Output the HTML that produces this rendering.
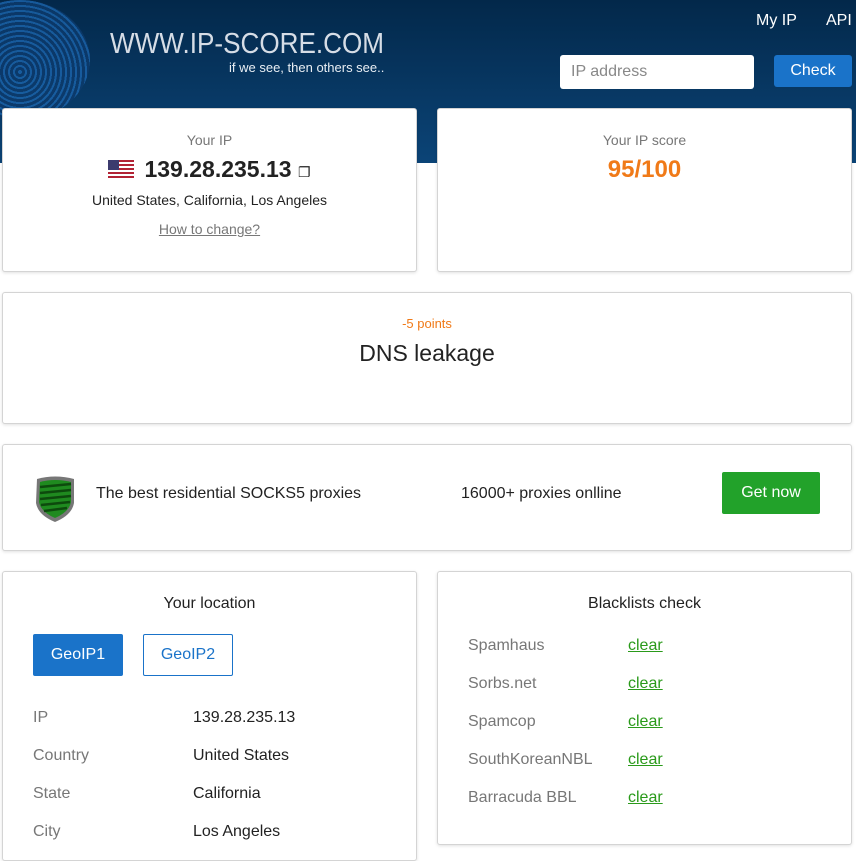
<!DOCTYPE html>
<html><head><style>
*{box-sizing:border-box;margin:0;padding:0}
body{width:856px;height:850px;overflow:hidden;background:#fff;font-family:"Liberation Sans",sans-serif;color:#222;position:relative}
.hdr{position:absolute;left:0;top:0;width:856px;height:163px;background:linear-gradient(180deg,#03284a 0%,#0b4477 100%)}
.fp{position:absolute;left:-50px;top:0px;width:140px;height:120px;border-radius:50%;background:repeating-radial-gradient(circle at 50% 60%,#1a62a8 0 2px,#0c3a6c 2px 5px);opacity:.85}
.logo{position:absolute;left:110px;top:28px;color:#d6dde6;font-size:29px;transform:scaleX(.9);transform-origin:0 0}
.tag{position:absolute;left:229px;top:60px;color:#e8eef4;font-size:13px}
.nav{position:absolute;top:12px;color:#fff;font-size:16px}
.inp{position:absolute;left:560px;top:55px;width:194px;height:34px;background:#fff;border-radius:3px;color:#888;font-size:16px;padding:8px 11px}
.btn{position:absolute;left:774px;top:55px;width:78px;height:32px;background:#1a73c9;border-radius:3px;color:#fff;font-size:16px;text-align:center;line-height:32px}
.card{position:absolute;background:#fff;border:1px solid #d4d4d4;border-radius:3px;box-shadow:0 1px 3px rgba(0,0,0,.12)}
.c{text-align:center}
.lbl{color:#777;font-size:14px}
.row{position:absolute;font-size:16px}
.k{color:#777}
.g{color:#2a9a1a;text-decoration:underline}
</style></head><body>
<div class="hdr"><div class="fp"></div>
<div class="logo">WWW.IP-SCORE.COM</div><div class="tag">if we see, then others see..</div>
<div class="nav" style="left:756px">My IP</div><div class="nav" style="left:826px">API</div>
<div class="inp">IP address</div><div class="btn">Check</div></div>

<div class="card c" style="left:2px;top:108px;width:415px;height:164px">
<div class="lbl" style="margin-top:23px">Your IP</div>
<div style="margin-top:8px;font-size:23px;font-weight:bold;color:#222"><span style="display:inline-block;width:26px;height:18px;vertical-align:-1px;margin-right:10px;background:linear-gradient(#3c3b6e,#3c3b6e) 0 0/11px 10px no-repeat,repeating-linear-gradient(#b22234 0 2px,#fff 2px 4px)"></span>139.28.235.13 <span style="font-size:14px;font-weight:normal">❐</span></div>
<div style="font-size:14px;margin-top:9px">United States, California, Los Angeles</div>
<div style="font-size:14px;color:#777;text-decoration:underline;margin-top:13px">How to change?</div></div>

<div class="card c" style="left:437px;top:108px;width:415px;height:164px">
<div class="lbl" style="margin-top:23px">Your IP score</div>
<div style="margin-top:8px;font-size:24px;font-weight:bold;color:#f07a18">95/100</div></div>

<div class="card c" style="left:2px;top:292px;width:850px;height:132px">
<div style="color:#f07a18;font-size:13px;margin-top:23px">-5 points</div>
<div style="font-size:23px;margin-top:9px">DNS leakage</div></div>

<div class="card" style="left:2px;top:444px;width:850px;height:107px">
<svg style="position:absolute;left:31px;top:30px" width="43" height="48" viewBox="0 0 43 48"><path d="M3 4Q21 -1 40 4L40 28Q38 40 21 47Q4 40 2 28Z" fill="#777"/><path d="M6 7Q21 3 37 7L37 27Q35 37 21 43Q7 37 5 27Z" fill="#1f8a1f"/><g stroke="#0d4a0d" stroke-width="2.5"><line x1="6" y1="12" x2="37" y2="9"/><line x1="6" y1="18" x2="37" y2="15"/><line x1="6" y1="24" x2="37" y2="21"/><line x1="7" y1="30" x2="36" y2="27"/><line x1="10" y1="36" x2="33" y2="33"/></g></svg>
<div class="row" style="left:93px;top:40px">The best residential SOCKS5 proxies</div>
<div class="row" style="left:458px;top:40px">16000+ proxies onlline</div>
<div style="position:absolute;left:719px;top:27px;width:98px;height:42px;background:#22a22a;border-radius:2px;color:#fff;font-size:16px;text-align:center;line-height:42px">Get now</div></div>

<div class="card" style="left:2px;top:571px;width:415px;height:290px">
<div class="c" style="font-size:16px;margin-top:23px">Your location</div>
<div style="position:absolute;left:30px;top:62px;width:90px;height:42px;background:#1a73c9;color:#fff;border-radius:2px;text-align:center;line-height:42px;font-size:16px">GeoIP1</div>
<div style="position:absolute;left:140px;top:62px;width:90px;height:42px;border:1.5px solid #1a73c9;color:#1a73c9;border-radius:2px;text-align:center;line-height:40px;font-size:16px">GeoIP2</div>
<div class="row k" style="left:30px;top:137px">IP</div><div class="row" style="left:190px;top:137px">139.28.235.13</div>
<div class="row k" style="left:30px;top:175px">Country</div><div class="row" style="left:190px;top:175px">United States</div>
<div class="row k" style="left:30px;top:213px">State</div><div class="row" style="left:190px;top:213px">California</div>
<div class="row k" style="left:30px;top:251px">City</div><div class="row" style="left:190px;top:251px">Los Angeles</div></div>

<div class="card" style="left:437px;top:571px;width:415px;height:274px">
<div class="c" style="font-size:16px;margin-top:23px">Blacklists check</div>
<div class="row k" style="left:30px;top:65px">Spamhaus</div><div class="row g" style="left:190px;top:65px">clear</div>
<div class="row k" style="left:30px;top:103px">Sorbs.net</div><div class="row g" style="left:190px;top:103px">clear</div>
<div class="row k" style="left:30px;top:141px">Spamcop</div><div class="row g" style="left:190px;top:141px">clear</div>
<div class="row k" style="left:30px;top:179px">SouthKoreanNBL</div><div class="row g" style="left:190px;top:179px">clear</div>
<div class="row k" style="left:30px;top:217px">Barracuda BBL</div><div class="row g" style="left:190px;top:217px">clear</div></div>
</body></html>
